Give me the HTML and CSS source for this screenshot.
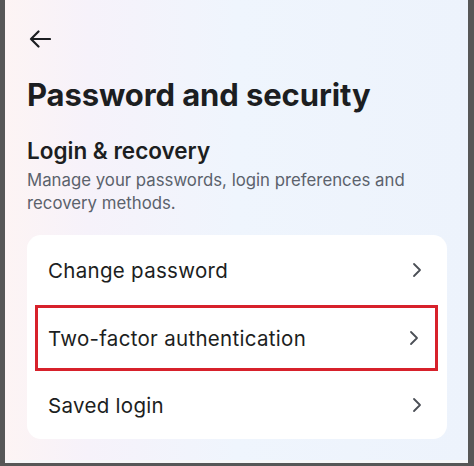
FILE: index.html
```html
<!DOCTYPE html>
<html>
<head>
<meta charset="utf-8">
<link rel="stylesheet" href="styles.css">
</head>
<body>
<div class="frame">
  <div class="screen">
    <div class="topbar">
      <svg class="back" width="22" height="18" viewBox="0 0 22 18"><path d="M21 9H2M9.5 1.5L2 9l7.5 7.5" fill="none" stroke="#1c1e21" stroke-width="2.2" stroke-linecap="round" stroke-linejoin="round"/></svg>
    </div>
    <h1 class="title">Password and security</h1>
    <h2 class="section">Login &amp; recovery</h2>
    <p class="desc">Manage your passwords, login preferences and recovery methods.</p>
    <div class="card">
      <div class="row first">
        <span class="label">Change password</span>
        <svg class="chev" width="10" height="16" viewBox="0 0 10 16"><path d="M2 2l6 6-6 6" fill="none" stroke="#4b4f56" stroke-width="1.8" stroke-linecap="round" stroke-linejoin="round"/></svg>
      </div>
      <div class="row highlight">
        <span class="label">Two-factor authentication</span>
        <svg class="chev" width="10" height="16" viewBox="0 0 10 16"><path d="M2 2l6 6-6 6" fill="none" stroke="#4b4f56" stroke-width="1.8" stroke-linecap="round" stroke-linejoin="round"/></svg>
      </div>
      <div class="row">
        <span class="label">Saved login</span>
        <svg class="chev" width="10" height="16" viewBox="0 0 10 16"><path d="M2 2l6 6-6 6" fill="none" stroke="#4b4f56" stroke-width="1.8" stroke-linecap="round" stroke-linejoin="round"/></svg>
      </div>
    </div>
  </div>
</div>
</body>
</html>
```
FILE: styles.css
```css
html, body {
  margin: 0;
  padding: 0;
  width: 474px;
  height: 466px;
  overflow: hidden;
}
body {
  background: #575757;
  font-family: Inter, "Noto Sans", sans-serif;
  color: #1c1e21;
}
.frame {
  padding: 0 6px 0 5px;
  height: 466px;
  box-sizing: border-box;
}
.screen {
  height: 463px;
  background: linear-gradient(90deg, #fdf4f4 0%, #f6f2fa 18%, #eff5fd 50%, #edf3fc 100%);
  padding: 0 21px 0 22px;
  box-sizing: border-box;
  border-bottom: 3px solid #f7f7f9;
}
.topbar {
  height: 31px;
  padding-top: 23px;
  padding-left: 2px;
  box-sizing: content-box;
  display: flex;
  align-items: center;
}
.back { display: block; }
.title {
  margin: 21px 0 0 0;
  font-size: 31px;
  font-weight: 700;
  line-height: 40px;
  letter-spacing: -0.1px;
}
.section {
  margin: 22px 0 0 0;
  font-size: 22.5px;
  font-weight: 600;
  line-height: 28px;
}
.desc {
  margin: 4px 0 0 0;
  font-size: 16.8px;
  line-height: 23px;
  color: #5b626c;
}
.card {
  margin-top: 20px;
  background: #fff;
  border-radius: 14px;
  display: flex;
  flex-direction: column;
  height: 204px;
}
.row {
  height: 68px;
  display: flex;
  align-items: center;
  justify-content: space-between;
  padding: 0 25px 0 21px;
  box-sizing: border-box;
}
.first { height: 70px; }
.highlight {
  height: 66px;
  margin: 0 9px 0 8px;
  padding: 0 16px 0 10px;
  border: 3px solid #d7212b;
}
.label {
  font-size: 20.5px;
  font-weight: 400;
  letter-spacing: 0.3px;
}
.chev { display: block; }
```
